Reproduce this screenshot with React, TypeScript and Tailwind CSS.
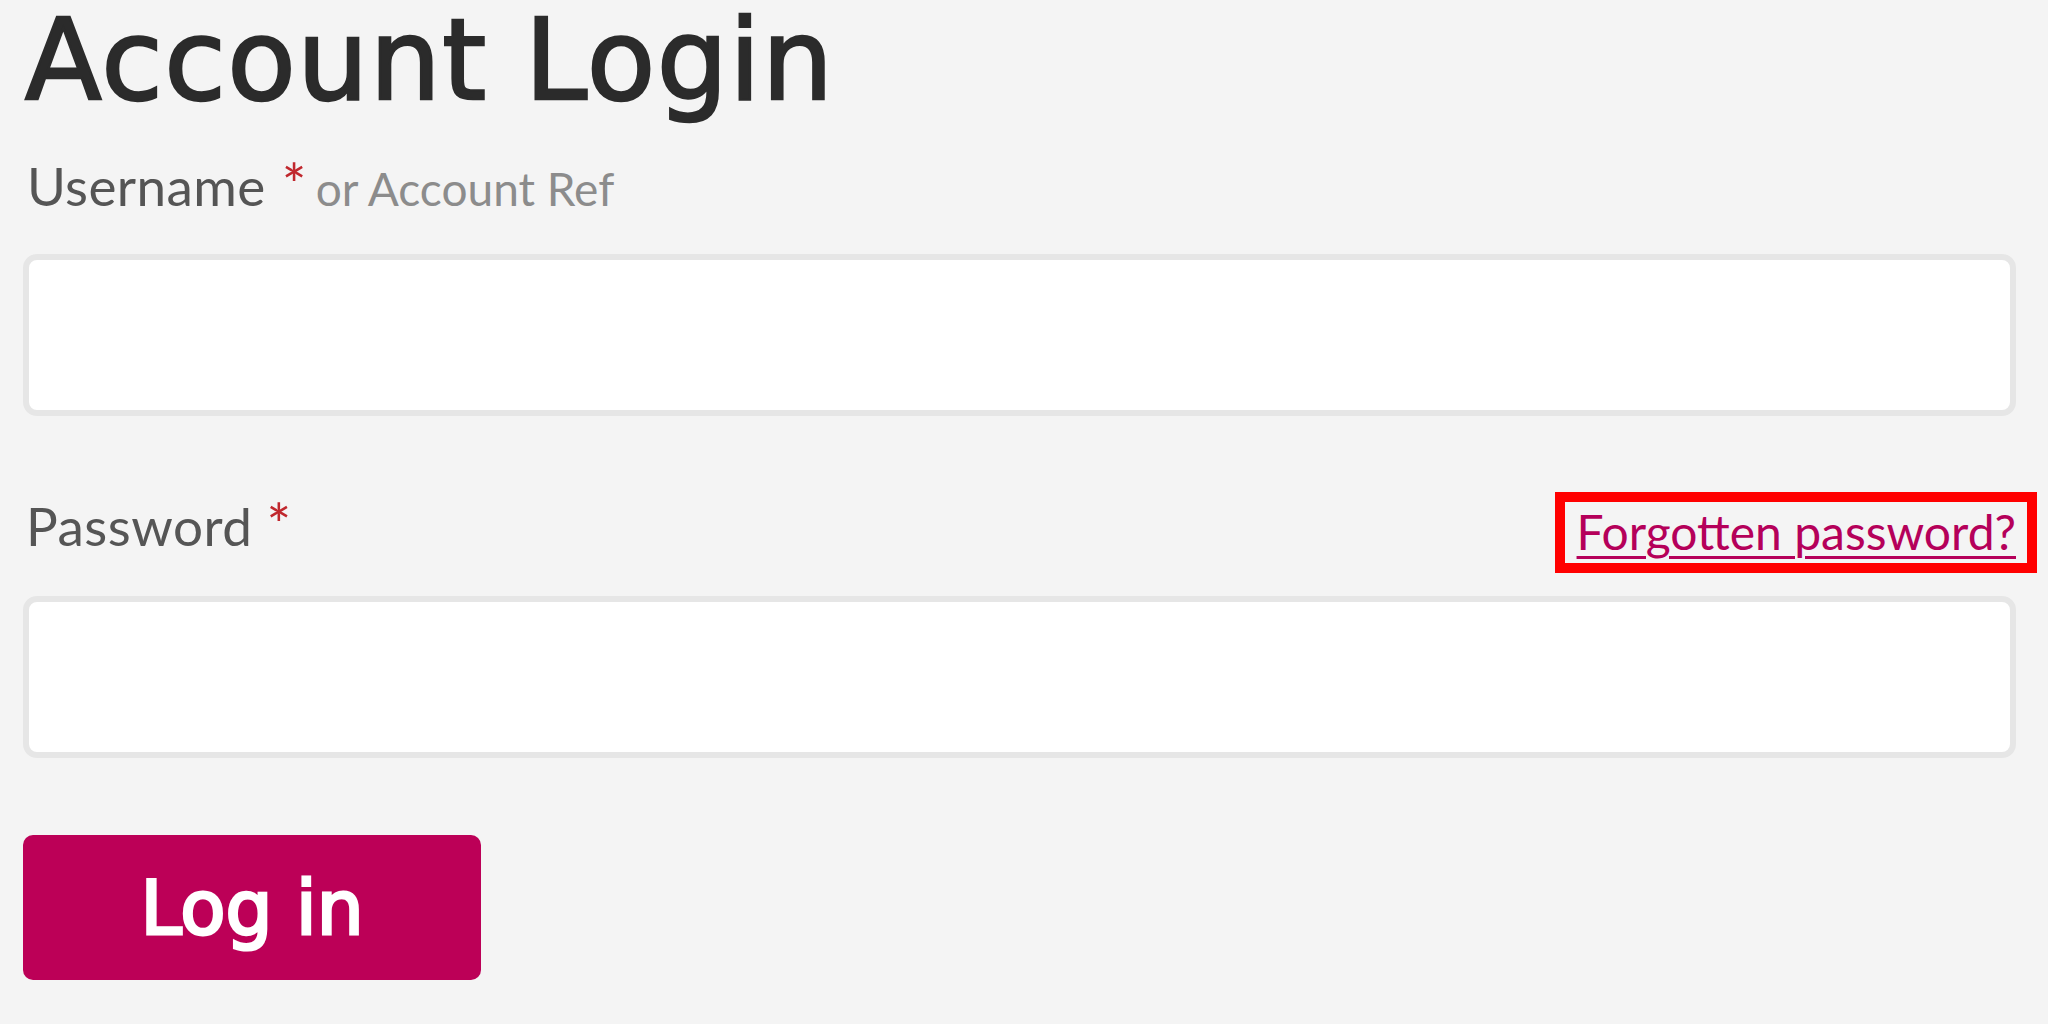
import React from 'react';

const bodyFont = { fontFamily: 'Lato, "Liberation Sans", sans-serif' };
const headFont = { fontFamily: '"DejaVu Sans", Lato, sans-serif' };

export default function App() {
    return (
        <div className="min-h-screen w-full bg-[#f4f4f4]" style={bodyFont}>
            <div className="ml-[23px] w-[1993px] flex flex-col">
                {/* Title */}
                <h1
                    className="ml-[2px] text-[112px] leading-[120px] text-[#2b2b2b] tracking-[1.5px] whitespace-nowrap [-webkit-text-stroke:2.5px_#2b2b2b]"
                    style={headFont}
                >
                    Account Login
                </h1>

                {/* Username */}
                <label className="mt-[35px] ml-[4px] h-[53px] text-[53px] leading-none text-[#555555] tracking-[0.4px] whitespace-nowrap">
                    Username
                    <span className="ml-[16px] text-[#c0272d] text-[58px] leading-none">*</span>
                    <span className="ml-[9px] text-[46px] text-[#8c8c8c] tracking-normal">or Account Ref</span>
                </label>
                <input
                    type="text"
                    className="mt-[46px] h-[162px] w-full rounded-[14px] border-[6px] border-[#e6e6e6] bg-white outline-none"
                />

                {/* Password */}
                <div className="mt-[79px] flex items-start justify-between">
                    <label className="ml-[3px] h-[53px] text-[53px] leading-none text-[#555555] tracking-[0.5px] whitespace-nowrap">
                        Password
                        <span className="ml-[14px] text-[#c0272d] text-[58px] leading-none">*</span>
                    </label>
                    <span className="relative mt-[13px]">
                        <a
                            href="#"
                            className="block text-[48px] leading-none text-[#b5005a] underline decoration-[3px] underline-offset-[6px] whitespace-nowrap"
                        >
                            Forgotten password?
                        </a>
                        {/* highlight box drawn over the link */}
                        <span className="absolute -left-[22px] -right-[21px] -top-[16px] -bottom-[17px] border-[10px] border-[#ff0000] pointer-events-none" />
                    </span>
                </div>
                <input
                    type="password"
                    className="mt-[40px] h-[162px] w-full rounded-[14px] border-[6px] border-[#e6e6e6] bg-white outline-none"
                />

                {/* Submit */}
                <button
                    type="button"
                    className="mt-[77px] h-[145px] w-[458px] rounded-[10px] bg-[#bc0057] text-white text-[74px] leading-none flex items-center justify-center [-webkit-text-stroke:3px_#ffffff]"
                    style={headFont}
                >
                    Log in
                </button>
            </div>
        </div>
    );
}
